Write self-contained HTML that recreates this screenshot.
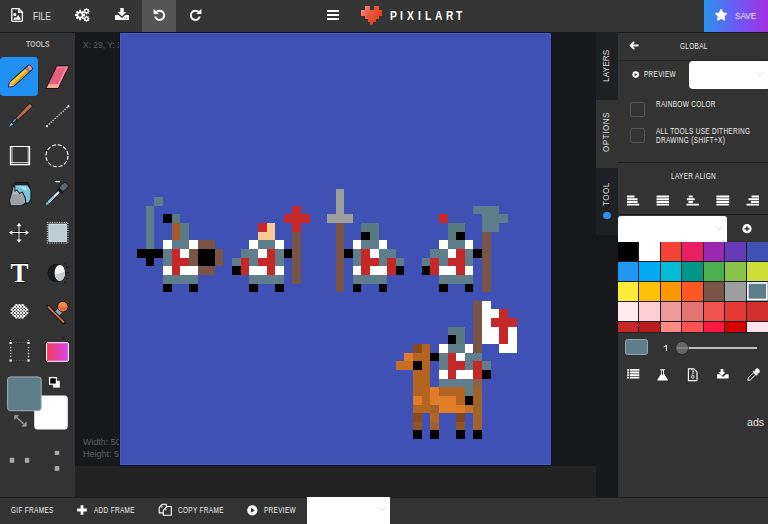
<!DOCTYPE html>
<html><head><meta charset="utf-8">
<style>
*{margin:0;padding:0;box-sizing:border-box}
html,body{width:768px;height:524px;overflow:hidden;background:#17181b;font-family:"Liberation Sans",sans-serif;color:#fff}
.a{position:absolute}
.t{position:absolute;white-space:nowrap;line-height:1}
svg{position:absolute;overflow:visible}
</style></head><body>
<!-- header -->
<div class="a" style="left:0;top:0;width:768px;height:32px;background:#353535"></div>
<div class="a" style="left:142px;top:0;width:34px;height:32px;background:#555"></div>
<!-- file icon -->
<svg style="left:0;top:0" width="30" height="30" viewBox="0 0 30 30">
 <path d="M12.6 8.6H18.8L22.4 12.2V20.5Q22.4 21.3 21.6 21.3H12.6Q11.8 21.3 11.8 20.5V9.4Q11.8 8.6 12.6 8.6z" fill="none" stroke="#fff" stroke-width="1.3"/>
 <path d="M18.6 8.6V12.4H22.4" fill="none" stroke="#fff" stroke-width="1.1"/>
 <path d="M19.4 10.2L20.9 11.7H19.4z" fill="#fff"/>
 <circle cx="14.8" cy="14.5" r="1.5" fill="#fff"/>
 <path d="M13.2 19.8L14.9 16.9L16.1 18.1L18.3 15.1L21 19.8z" fill="#fff"/>
</svg>
<!-- gears -->
<svg style="left:75.2px;top:8.4px" width="15" height="14" viewBox="0 0 15 14">
 <g fill="#fff">
  <circle cx="5" cy="7" r="3.6"/>
  <g stroke="#fff" stroke-width="2"><path d="M5 1.8v10.4M0 7h10M1.4 3.4l7.2 7.2M8.6 3.4l-7.2 7.2"/></g>
  <circle cx="5" cy="7" r="1.8" fill="#353535"/>
  <circle cx="11.5" cy="3.2" r="2.2"/>
  <g stroke="#fff" stroke-width="1.2"><path d="M11.5 0.2v6M8.5 3.2h6M9.4 1.1l4.2 4.2M13.6 1.1l-4.2 4.2"/></g>
  <circle cx="11.5" cy="3.2" r="1.1" fill="#353535"/>
  <circle cx="11.5" cy="10.8" r="2.2"/>
  <g stroke="#fff" stroke-width="1.2"><path d="M11.5 7.8v6M8.5 10.8h6M9.4 8.7l4.2 4.2M13.6 8.7l-4.2 4.2"/></g>
  <circle cx="11.5" cy="10.8" r="1.1" fill="#353535"/>
 </g>
</svg>
<!-- download -->
<svg style="left:115px;top:8px" width="14" height="12" viewBox="0 0 14 12">
 <path d="M5.3 0h3.4v4h2.6L7 8.3 2.7 4h2.6z" fill="#fff"/>
 <path d="M0 7h3.5l3.5 3 3.5-3H14v5H0z" fill="#fff"/>
 <circle cx="9.8" cy="10.1" r="0.6" fill="#353535"/><circle cx="11.8" cy="10.1" r="0.6" fill="#353535"/>
</svg>
<!-- undo -->
<svg style="left:152.6px;top:8.2px" width="13" height="13" viewBox="0 0 13 13">
 <path d="M3.2 4.2A4.6 4.6 0 1 1 2.2 8.6" fill="none" stroke="#fff" stroke-width="1.9"/>
 <path d="M0.6 0.8v5.2h5.2z" fill="#fff"/>
</svg>
<!-- redo -->
<svg style="left:189.2px;top:8.1px" width="13" height="13" viewBox="0 0 13 13">
 <path d="M9.8 4.2A4.6 4.6 0 1 0 10.8 8.6" fill="none" stroke="#fff" stroke-width="1.9"/>
 <path d="M12.4 0.8v5.2H7.2z" fill="#fff"/>
</svg>
<!-- hamburger -->
<svg style="left:327px;top:10px" width="12" height="10" viewBox="0 0 12 10">
 <path d="M0 0h12v2H0zM0 4h12v2H0zM0 8h12v2H0z" fill="#fff"/>
</svg>
<!-- heart -->
<svg style="left:361px;top:6px" width="21" height="19" viewBox="0 0 21 19">
 <defs><linearGradient id="hg" x1="0" y1="0" x2="1" y2="0.6"><stop offset="0" stop-color="#f59a88"/><stop offset="0.45" stop-color="#ee5a45"/><stop offset="1" stop-color="#e23a16"/></linearGradient></defs>
 <path d="M4 0h5v4h4V0h5v4h3v6h-3v3h-3v3h-3v2.5h-3V16H7v-3H4v-3H0V4h4z" fill="url(#hg)"/>
</svg>
<!-- save -->
<div class="a" style="left:704px;top:0;width:64px;height:32px;background:linear-gradient(90deg,#2a94ee,#6b5cf3 50%,#a22fe2)"></div>
<svg style="left:0;top:0" width="768" height="32" viewBox="0 0 768 32"><path d="M721.10 9.15 L722.89 12.88 L727.00 13.43 L724.00 16.29 L724.74 20.37 L721.10 18.40 L717.46 20.37 L718.20 16.29 L715.20 13.43 L719.31 12.88z" fill="#fff" stroke="#fff" stroke-width="0.9" stroke-linejoin="round"/></svg>

<!-- left toolbar -->
<div class="a" style="left:0;top:33px;width:75px;height:464px;background:#333"></div>
<div class="a" style="left:0;top:57px;width:38px;height:39px;background:#2090f2;border-radius:4px"></div>
<svg style="left:0;top:0" width="75" height="497" viewBox="0 0 75 497">
 <!-- pencil -->
 <g transform="translate(19.8 76.8) rotate(-42)">
  <rect x="-12" y="-3.4" width="27.8" height="6.8" rx="2.5" fill="#1b2440"/>
  <path d="M-16 0L-11.5 -3.4V3.4z" fill="#1b2440"/>
  <rect x="-11" y="-2.4" width="20.5" height="4.8" fill="#f5c93a"/>
  <rect x="-11" y="0.6" width="20.5" height="1.8" fill="#d99b1f"/>
  <path d="M-14.6 0L-11 -2.4V2.4z" fill="#f3d2a6"/>
  <rect x="9.5" y="-2.4" width="2.2" height="4.8" fill="#8e8e96"/>
  <rect x="11.7" y="-2.6" width="3.4" height="5.2" rx="1.8" fill="#e99a92"/>
 </g>
 <!-- eraser -->
 <path d="M56.4 65.3H69.8L58.6 89H45.4z" fill="#1e1216"/>
 <path d="M57 66.4H68.2L57.8 87.9H46.6z" fill="#e5607f"/>
 <path d="M66 66.4H68.2L57.8 87.9H55.8L65.8 67z" fill="#f08aa2"/>
 <path d="M48.6 84.2H59.6L57.8 87.9H46.8z" fill="#f4ae92"/>
 <path d="M57 66.4H68.2L67.4 68.2H56.2z" fill="#ec7a92"/>
 <!-- brush -->
 <g transform="translate(19.7 116.2) rotate(-45)">
  <path d="M-5 -1.9L16 -2.7Q17.6 0 16 2.7L-5 1.9z" fill="#1e1e24"/>
  <path d="M-4 -1.0L15.6 -1.8Q16.6 0 15.6 1.8L-4 1.0z" fill="#b86c4c"/>
  <rect x="-9.5" y="-2.3" width="5.5" height="4.6" fill="#1e2a40"/>
  <rect x="-8.5" y="-1.3" width="3.5" height="1.2" fill="#8894a8"/>
  <path d="M-16 0L-9.5 -2.3V2.3z" fill="#1e2a40"/>
  <path d="M-15 0L-10.5 -1.4V1.4z" fill="#7ec6cc"/>
 </g>
 <!-- line -->
 <g fill="#fff">
  <circle cx="46.8" cy="126.2" r="1.1"/><circle cx="68.4" cy="106.2" r="1.1"/>
 </g>
 <path d="M46.8 126.2L68.4 106.2" stroke="#fff" stroke-width="1.2" stroke-dasharray="1.2 1.5" fill="none"/>
 <!-- rectangle -->
 <path d="M10.4 146.5H29.6V164.6H10.4z" stroke="#fff" stroke-width="1.1" fill="none"/>
 <path d="M12 147V164M28.2 147V164M11 162.6H29" stroke="#fff" stroke-width="0.8" fill="none"/>
 <!-- ellipse -->
 <circle cx="57" cy="155.8" r="11" stroke="#fff" stroke-width="1.1" fill="none" stroke-dasharray="4 1.8"/>
 <!-- bucket -->
 <path d="M12.6 185.6L15.4 182.8H27.4L30.6 187.6" fill="none" stroke="#15171a" stroke-width="1.4"/>
 <path d="M12.8 186.2H26.2V203.4L21.4 206.2H10.2L8.9 200.6z" fill="#15171a"/>
 <path d="M13.6 187.2H25.2V202.8L21 205.2H10.9L9.9 200.6z" fill="#9aa2a8"/>
 <path d="M13.6 187.2H25.2V193L13 194.5z" fill="#b4bcc0"/>
 <path d="M14.2 184.2H27.8L31.4 189.6V199.4L29 203.4H25.4L24.6 197.4L22.2 192.6L19.4 194L16.8 190.6L14.6 192.2z" fill="#15171a"/>
 <path d="M15.2 185.2H27.3L30.4 189.9V199L28.5 202.4H26.3L25.6 197.2L22.6 191.4L19.6 192.8L17 189.4L15.4 190.6z" fill="#76c6da"/>
 <path d="M17 186.2H25L27.6 189.6L24.6 190.4L21.6 188.4z" fill="#a6e0ee"/>
 <!-- eyedropper -->
 <path d="M54.8 181.6H60" stroke="#fff" stroke-width="1.2"/>
 <g transform="translate(57.6 193.2) rotate(-45)">
  <rect x="-13.6" y="-2" width="16" height="4" fill="#15171a"/>
  <rect x="-13" y="-1.1" width="15" height="2.2" fill="#dfe8ea"/>
  <rect x="-13" y="-1.1" width="8" height="2.2" fill="#7ccad8"/>
  <rect x="2" y="-3.2" width="2.6" height="6.4" fill="#15171a"/>
  <rect x="4" y="-3.6" width="10" height="7.2" rx="3.6" fill="#15171a"/>
  <rect x="4.8" y="-2.8" width="8.4" height="5.6" rx="2.8" fill="#5c636c"/>
  <path d="M-16.6 0L-13.6 -1.8V1.8z" fill="#7ccad8"/>
 </g>
 <!-- move -->
 <g stroke="#111" stroke-width="2.6" fill="#111">
  <path d="M10 232.6H28M19 223.8V242"/>
 </g>
 <g fill="#fff">
  <path d="M10.5 232.1H27.5V233.1H10.5zM18.5 224.3H19.5V241.5H18.5z"/>
  <path d="M9 232.6L12.4 230.2V235z M29 232.6L25.6 230.2V235z M19 222.8L16.6 226.2H21.4z M19 242.8L16.6 239.4H21.4z"/>
 </g>
 <!-- selection fill -->
 <rect x="47.3" y="222.4" width="20.6" height="20.6" fill="#1c1e20" stroke="#fff" stroke-width="1" stroke-dasharray="1 1.35"/>
 <rect x="48.8" y="224" width="17.6" height="17.4" fill="#bccdd4" stroke="#e6eef0" stroke-width="0.8"/>
 <!-- text T -->
 <text x="19.5" y="282.4" text-anchor="middle" font-family="Liberation Serif" font-weight="bold" font-size="27" fill="#fff" stroke="#000" stroke-width="0.8" paint-order="stroke">T</text>
 <!-- moon -->
 <g stroke="#111" stroke-width="1">
  <path d="M64 264.5l2.2-2.2M65.6 268l2.8-1M66 272.8h3M65.6 277.6l2.8 1M64 281.2l2.2 2.2"/>
 </g>
 <circle cx="56.6" cy="272.9" r="9.2" fill="#141516"/>
 <circle cx="56.6" cy="272.9" r="8.2" fill="#1a1b1c"/>
 <ellipse cx="59.8" cy="272.9" rx="5.2" ry="8" fill="#f4f4f4"/>
 <path d="M55 275L64.8 271.5A5.2 8 0 0 1 59.8 280.9A5.2 8 0 0 1 55 275z" fill="#c8cacc"/>
 <!-- dither -->
 <g id="dith" fill="#fff"><rect x="15.37" y="304.08" width="2.05" height="2.05" fill="#fff"/><rect x="18.48" y="304.08" width="2.05" height="2.05" fill="#fff"/><rect x="21.58" y="304.08" width="2.05" height="2.05" fill="#fff"/><rect x="13.82" y="305.63" width="2.05" height="2.05" fill="#fff"/><rect x="16.93" y="305.63" width="2.05" height="2.05" fill="#fff"/><rect x="20.03" y="305.63" width="2.05" height="2.05" fill="#fff"/><rect x="23.12" y="305.63" width="2.05" height="2.05" fill="#fff"/><rect x="12.28" y="307.18" width="2.05" height="2.05" fill="#fff"/><rect x="15.37" y="307.18" width="2.05" height="2.05" fill="#fff"/><rect x="18.48" y="307.18" width="2.05" height="2.05" fill="#fff"/><rect x="21.58" y="307.18" width="2.05" height="2.05" fill="#fff"/><rect x="24.68" y="307.18" width="2.05" height="2.05" fill="#fff"/><rect x="10.72" y="308.73" width="2.05" height="2.05" fill="#fff"/><rect x="13.82" y="308.73" width="2.05" height="2.05" fill="#fff"/><rect x="16.93" y="308.73" width="2.05" height="2.05" fill="#fff"/><rect x="20.03" y="308.73" width="2.05" height="2.05" fill="#fff"/><rect x="23.12" y="308.73" width="2.05" height="2.05" fill="#fff"/><rect x="26.23" y="308.73" width="2.05" height="2.05" fill="#fff"/><rect x="12.28" y="310.28" width="2.05" height="2.05" fill="#fff"/><rect x="15.37" y="310.28" width="2.05" height="2.05" fill="#fff"/><rect x="18.48" y="310.28" width="2.05" height="2.05" fill="#fff"/><rect x="21.58" y="310.28" width="2.05" height="2.05" fill="#fff"/><rect x="24.68" y="310.28" width="2.05" height="2.05" fill="#fff"/><rect x="10.72" y="311.83" width="2.05" height="2.05" fill="#fff"/><rect x="13.82" y="311.83" width="2.05" height="2.05" fill="#fff"/><rect x="16.93" y="311.83" width="2.05" height="2.05" fill="#fff"/><rect x="20.03" y="311.83" width="2.05" height="2.05" fill="#fff"/><rect x="23.12" y="311.83" width="2.05" height="2.05" fill="#fff"/><rect x="26.23" y="311.83" width="2.05" height="2.05" fill="#fff"/><rect x="12.28" y="313.38" width="2.05" height="2.05" fill="#fff"/><rect x="15.37" y="313.38" width="2.05" height="2.05" fill="#fff"/><rect x="18.48" y="313.38" width="2.05" height="2.05" fill="#fff"/><rect x="21.58" y="313.38" width="2.05" height="2.05" fill="#fff"/><rect x="24.68" y="313.38" width="2.05" height="2.05" fill="#fff"/><rect x="13.82" y="314.93" width="2.05" height="2.05" fill="#fff"/><rect x="16.93" y="314.93" width="2.05" height="2.05" fill="#fff"/><rect x="20.03" y="314.93" width="2.05" height="2.05" fill="#fff"/><rect x="23.12" y="314.93" width="2.05" height="2.05" fill="#fff"/><rect x="15.37" y="316.48" width="2.05" height="2.05" fill="#fff"/><rect x="18.48" y="316.48" width="2.05" height="2.05" fill="#fff"/><rect x="21.58" y="316.48" width="2.05" height="2.05" fill="#fff"/><circle cx="16.40" cy="306.65" r="0.55" fill="#000"/><circle cx="19.50" cy="306.65" r="0.55" fill="#000"/><circle cx="22.60" cy="306.65" r="0.55" fill="#000"/><circle cx="14.85" cy="308.20" r="0.55" fill="#000"/><circle cx="17.95" cy="308.20" r="0.55" fill="#000"/><circle cx="21.05" cy="308.20" r="0.55" fill="#000"/><circle cx="24.15" cy="308.20" r="0.55" fill="#000"/><circle cx="13.30" cy="309.75" r="0.55" fill="#000"/><circle cx="16.40" cy="309.75" r="0.55" fill="#000"/><circle cx="19.50" cy="309.75" r="0.55" fill="#000"/><circle cx="22.60" cy="309.75" r="0.55" fill="#000"/><circle cx="25.70" cy="309.75" r="0.55" fill="#000"/><circle cx="11.75" cy="311.30" r="0.55" fill="#000"/><circle cx="14.85" cy="311.30" r="0.55" fill="#000"/><circle cx="17.95" cy="311.30" r="0.55" fill="#000"/><circle cx="21.05" cy="311.30" r="0.55" fill="#000"/><circle cx="24.15" cy="311.30" r="0.55" fill="#000"/><circle cx="27.25" cy="311.30" r="0.55" fill="#000"/><circle cx="13.30" cy="312.85" r="0.55" fill="#000"/><circle cx="16.40" cy="312.85" r="0.55" fill="#000"/><circle cx="19.50" cy="312.85" r="0.55" fill="#000"/><circle cx="22.60" cy="312.85" r="0.55" fill="#000"/><circle cx="25.70" cy="312.85" r="0.55" fill="#000"/><circle cx="14.85" cy="314.40" r="0.55" fill="#000"/><circle cx="17.95" cy="314.40" r="0.55" fill="#000"/><circle cx="21.05" cy="314.40" r="0.55" fill="#000"/><circle cx="24.15" cy="314.40" r="0.55" fill="#000"/><circle cx="16.40" cy="315.95" r="0.55" fill="#000"/><circle cx="19.50" cy="315.95" r="0.55" fill="#000"/><circle cx="22.60" cy="315.95" r="0.55" fill="#000"/></g>
 <!-- stamp -->
 <path d="M48 306.6L64 322.4" stroke="#1a1210" stroke-width="3.8" stroke-linecap="round"/>
 <path d="M48.4 307L63.6 322" stroke="#c27048" stroke-width="1.9" stroke-linecap="round"/>
 <path d="M54.5 311.4L58.6 306.8L63.6 312.2L59.4 316.2z" fill="#1b1c22"/>
 <path d="M55.4 311.5L58.6 307.8L62.6 312.2L59.4 315.2z" fill="#8ca2bc"/>
 <circle cx="62.8" cy="306.6" r="5.6" fill="#1a1010"/>
 <circle cx="62.8" cy="306.6" r="4.8" fill="#f08a4a"/>
 <path d="M62.8 306.6m-4.8 0a4.8 4.8 0 0 0 9.6 0" fill="#e86a3a"/>
 <!-- dotted selection -->
 <g fill="#fff"><circle cx="10.6" cy="340.4" r="0.75"/><rect x="9.5" y="342" width="2.2" height="2" /><circle cx="10.6" cy="347.4" r="0.75"/><circle cx="10.6" cy="350.4" r="0.75"/><circle cx="10.6" cy="353.4" r="0.75"/><circle cx="10.6" cy="356.4" r="0.75"/><rect x="9.5" y="359.4" width="2.2" height="2.2"/><circle cx="28.5" cy="340.4" r="0.75"/><rect x="27.4" y="342" width="2.2" height="2" /><circle cx="28.5" cy="347.4" r="0.75"/><circle cx="28.5" cy="350.4" r="0.75"/><circle cx="28.5" cy="353.4" r="0.75"/><circle cx="28.5" cy="356.4" r="0.75"/><rect x="27.4" y="359.4" width="2.2" height="2.2"/><circle cx="13.8" cy="342.6" r="0.5" fill="#777"/><circle cx="13.8" cy="360.6" r="0.5" fill="#777"/><circle cx="16.8" cy="342.6" r="0.5" fill="#777"/><circle cx="16.8" cy="360.6" r="0.5" fill="#777"/><circle cx="19.8" cy="342.6" r="0.5" fill="#777"/><circle cx="19.8" cy="360.6" r="0.5" fill="#777"/><circle cx="22.8" cy="342.6" r="0.5" fill="#777"/><circle cx="22.8" cy="360.6" r="0.5" fill="#777"/><circle cx="25.8" cy="342.6" r="0.5" fill="#777"/><circle cx="25.8" cy="360.6" r="0.5" fill="#777"/></g>
 <!-- gradient -->
 <defs><linearGradient id="gr" x1="0" x2="1"><stop offset="0" stop-color="#f43c58"/><stop offset="1" stop-color="#d846f2"/></linearGradient></defs>
 <rect x="46.6" y="342.7" width="21.8" height="18.6" rx="1" fill="url(#gr)" stroke="#fff" stroke-width="1"/>
 <path d="M61.6 336.8l1.6 1.6 1.6-1.6" stroke="#111" stroke-width="0.9" fill="none"/>
 <!-- colors -->
 <rect x="34.2" y="395.4" width="33.6" height="34" rx="3.5" fill="#fff"/>
 <rect x="7.6" y="376.9" width="33.6" height="33.8" rx="3" fill="#607d8b" stroke="#9eb0b8" stroke-width="1"/>
 <rect x="53" y="380.8" width="6.8" height="6.8" fill="#fff"/>
 <rect x="49.6" y="377.6" width="6.8" height="6.6" fill="#000" stroke="#fff" stroke-width="1.3"/>
 <g stroke="#9a9a9a" stroke-width="1.4" fill="#9a9a9a">
  <path d="M15.6 416.4L25.2 425.2"/>
  <path d="M14.5 415.3h4.2l-4.2 4.2z M26.3 426.3h-4.2l4.2-4.2z" stroke-width="0.6"/>
 </g>
 <!-- dots -->
 <g fill="#aaa">
  <rect x="9.8" y="457.8" width="4.4" height="5"/>
  <rect x="24.9" y="457.8" width="4.3" height="5"/>
  <rect x="54.8" y="450.9" width="4.4" height="4"/>
  <rect x="54.8" y="466" width="4.4" height="4.8"/>
 </g>
</svg>


<!-- canvas area -->
<div class="t" style="left:82.70px;top:40.00px;font-size:9.4px;font-weight:normal;letter-spacing:0px;color:#5d6065;transform-origin:0 0;transform:scaleX(0.9);">X: 29, Y: 3</div>
<div class="t" style="left:82.90px;top:437.00px;font-size:9.4px;font-weight:normal;letter-spacing:0px;color:#5d6065;transform-origin:0 0;transform:scaleX(0.95);">Width: 50</div>
<div class="t" style="left:82.90px;top:449.00px;font-size:9.4px;font-weight:normal;letter-spacing:0px;color:#5d6065;transform-origin:0 0;transform:scaleX(0.957);">Height: 50</div>
<div class="a" style="left:120px;top:33px;width:431px;height:432px;background:#3f51b5;box-shadow:0 0 0 1px #0c1030,inset 0 0 0 1px #4a5bbd"></div>
<svg style="left:120px;top:33px" width="431" height="432" viewBox="0 0 50 50" preserveAspectRatio="none" shape-rendering="crispEdges">
<rect x="25" y="18" width="1" height="1" fill="#9e9e9e"/>
<rect x="4" y="19" width="1" height="1" fill="#607d8b"/>
<rect x="25" y="19" width="1" height="1" fill="#9e9e9e"/>
<rect x="3" y="20" width="1" height="1" fill="#607d8b"/>
<rect x="20" y="20" width="1" height="1" fill="#c62828"/>
<rect x="25" y="20" width="1" height="1" fill="#9e9e9e"/>
<rect x="41" y="20" width="3" height="1" fill="#607d8b"/>
<rect x="3" y="21" width="1" height="1" fill="#607d8b"/>
<rect x="5" y="21" width="1" height="1" fill="#000000"/>
<rect x="6" y="21" width="1" height="1" fill="#587a80"/>
<rect x="19" y="21" width="3" height="1" fill="#c62828"/>
<rect x="24" y="21" width="3" height="1" fill="#9e9e9e"/>
<rect x="37" y="21" width="1" height="1" fill="#c62828"/>
<rect x="42" y="21" width="3" height="1" fill="#607d8b"/>
<rect x="3" y="22" width="1" height="1" fill="#607d8b"/>
<rect x="6" y="22" width="1" height="1" fill="#a05a2c"/>
<rect x="7" y="22" width="1" height="1" fill="#587a80"/>
<rect x="16" y="22" width="1" height="1" fill="#c62828"/>
<rect x="17" y="22" width="1" height="1" fill="#fccb92"/>
<rect x="20" y="22" width="1" height="1" fill="#c62828"/>
<rect x="25" y="22" width="1" height="1" fill="#795548"/>
<rect x="28" y="22" width="2" height="1" fill="#587a80"/>
<rect x="38" y="22" width="2" height="1" fill="#587a80"/>
<rect x="42" y="22" width="2" height="1" fill="#607d8b"/>
<rect x="3" y="23" width="1" height="1" fill="#607d8b"/>
<rect x="6" y="23" width="1" height="1" fill="#a05a2c"/>
<rect x="7" y="23" width="1" height="1" fill="#587a80"/>
<rect x="16" y="23" width="2" height="1" fill="#fccb92"/>
<rect x="20" y="23" width="1" height="1" fill="#795548"/>
<rect x="25" y="23" width="1" height="1" fill="#795548"/>
<rect x="28" y="23" width="1" height="1" fill="#000000"/>
<rect x="29" y="23" width="1" height="1" fill="#587a80"/>
<rect x="38" y="23" width="1" height="1" fill="#587a80"/>
<rect x="39" y="23" width="1" height="1" fill="#000000"/>
<rect x="42" y="23" width="1" height="1" fill="#795548"/>
<rect x="3" y="24" width="1" height="1" fill="#607d8b"/>
<rect x="5" y="24" width="1" height="1" fill="#ffffff"/>
<rect x="6" y="24" width="2" height="1" fill="#607d8b"/>
<rect x="8" y="24" width="1" height="1" fill="#ffffff"/>
<rect x="9" y="24" width="2" height="1" fill="#795548"/>
<rect x="15" y="24" width="1" height="1" fill="#ffffff"/>
<rect x="16" y="24" width="2" height="1" fill="#607d8b"/>
<rect x="18" y="24" width="1" height="1" fill="#ffffff"/>
<rect x="20" y="24" width="1" height="1" fill="#795548"/>
<rect x="25" y="24" width="1" height="1" fill="#795548"/>
<rect x="27" y="24" width="1" height="1" fill="#ffffff"/>
<rect x="28" y="24" width="2" height="1" fill="#607d8b"/>
<rect x="30" y="24" width="1" height="1" fill="#ffffff"/>
<rect x="37" y="24" width="1" height="1" fill="#ffffff"/>
<rect x="38" y="24" width="2" height="1" fill="#607d8b"/>
<rect x="40" y="24" width="1" height="1" fill="#ffffff"/>
<rect x="42" y="24" width="1" height="1" fill="#795548"/>
<rect x="2" y="25" width="3" height="1" fill="#000000"/>
<rect x="5" y="25" width="1" height="1" fill="#607d8b"/>
<rect x="6" y="25" width="1" height="1" fill="#c62828"/>
<rect x="7" y="25" width="1" height="1" fill="#ffffff"/>
<rect x="8" y="25" width="1" height="1" fill="#795548"/>
<rect x="9" y="25" width="2" height="1" fill="#000000"/>
<rect x="11" y="25" width="1" height="1" fill="#795548"/>
<rect x="14" y="25" width="2" height="1" fill="#607d8b"/>
<rect x="16" y="25" width="1" height="1" fill="#ffffff"/>
<rect x="17" y="25" width="1" height="1" fill="#c62828"/>
<rect x="18" y="25" width="1" height="1" fill="#607d8b"/>
<rect x="19" y="25" width="1" height="1" fill="#000000"/>
<rect x="20" y="25" width="1" height="1" fill="#795548"/>
<rect x="25" y="25" width="1" height="1" fill="#795548"/>
<rect x="26" y="25" width="1" height="1" fill="#000000"/>
<rect x="27" y="25" width="1" height="1" fill="#607d8b"/>
<rect x="28" y="25" width="1" height="1" fill="#c62828"/>
<rect x="29" y="25" width="1" height="1" fill="#ffffff"/>
<rect x="30" y="25" width="2" height="1" fill="#607d8b"/>
<rect x="36" y="25" width="2" height="1" fill="#607d8b"/>
<rect x="38" y="25" width="1" height="1" fill="#ffffff"/>
<rect x="39" y="25" width="1" height="1" fill="#c62828"/>
<rect x="40" y="25" width="1" height="1" fill="#607d8b"/>
<rect x="41" y="25" width="1" height="1" fill="#000000"/>
<rect x="42" y="25" width="1" height="1" fill="#795548"/>
<rect x="3" y="26" width="1" height="1" fill="#000000"/>
<rect x="5" y="26" width="1" height="1" fill="#607d8b"/>
<rect x="6" y="26" width="2" height="1" fill="#c62828"/>
<rect x="8" y="26" width="1" height="1" fill="#795548"/>
<rect x="9" y="26" width="2" height="1" fill="#000000"/>
<rect x="11" y="26" width="1" height="1" fill="#795548"/>
<rect x="13" y="26" width="1" height="1" fill="#607d8b"/>
<rect x="14" y="26" width="1" height="1" fill="#c62828"/>
<rect x="15" y="26" width="1" height="1" fill="#607d8b"/>
<rect x="16" y="26" width="2" height="1" fill="#c62828"/>
<rect x="18" y="26" width="1" height="1" fill="#607d8b"/>
<rect x="20" y="26" width="1" height="1" fill="#795548"/>
<rect x="25" y="26" width="1" height="1" fill="#795548"/>
<rect x="27" y="26" width="1" height="1" fill="#607d8b"/>
<rect x="28" y="26" width="2" height="1" fill="#c62828"/>
<rect x="30" y="26" width="1" height="1" fill="#607d8b"/>
<rect x="31" y="26" width="1" height="1" fill="#c62828"/>
<rect x="32" y="26" width="1" height="1" fill="#607d8b"/>
<rect x="35" y="26" width="1" height="1" fill="#607d8b"/>
<rect x="36" y="26" width="1" height="1" fill="#c62828"/>
<rect x="37" y="26" width="1" height="1" fill="#607d8b"/>
<rect x="38" y="26" width="2" height="1" fill="#c62828"/>
<rect x="40" y="26" width="1" height="1" fill="#607d8b"/>
<rect x="42" y="26" width="1" height="1" fill="#795548"/>
<rect x="5" y="27" width="1" height="1" fill="#ffffff"/>
<rect x="6" y="27" width="1" height="1" fill="#c62828"/>
<rect x="7" y="27" width="2" height="1" fill="#ffffff"/>
<rect x="9" y="27" width="2" height="1" fill="#795548"/>
<rect x="13" y="27" width="1" height="1" fill="#000000"/>
<rect x="14" y="27" width="1" height="1" fill="#c62828"/>
<rect x="15" y="27" width="2" height="1" fill="#ffffff"/>
<rect x="17" y="27" width="1" height="1" fill="#c62828"/>
<rect x="18" y="27" width="1" height="1" fill="#ffffff"/>
<rect x="20" y="27" width="1" height="1" fill="#795548"/>
<rect x="25" y="27" width="1" height="1" fill="#795548"/>
<rect x="27" y="27" width="1" height="1" fill="#ffffff"/>
<rect x="28" y="27" width="1" height="1" fill="#c62828"/>
<rect x="29" y="27" width="2" height="1" fill="#ffffff"/>
<rect x="31" y="27" width="1" height="1" fill="#c62828"/>
<rect x="32" y="27" width="1" height="1" fill="#000000"/>
<rect x="35" y="27" width="1" height="1" fill="#000000"/>
<rect x="36" y="27" width="1" height="1" fill="#c62828"/>
<rect x="37" y="27" width="2" height="1" fill="#ffffff"/>
<rect x="39" y="27" width="1" height="1" fill="#c62828"/>
<rect x="40" y="27" width="1" height="1" fill="#ffffff"/>
<rect x="42" y="27" width="1" height="1" fill="#795548"/>
<rect x="5" y="28" width="4" height="1" fill="#607d8b"/>
<rect x="15" y="28" width="4" height="1" fill="#607d8b"/>
<rect x="20" y="28" width="1" height="1" fill="#795548"/>
<rect x="25" y="28" width="1" height="1" fill="#795548"/>
<rect x="27" y="28" width="4" height="1" fill="#607d8b"/>
<rect x="37" y="28" width="4" height="1" fill="#607d8b"/>
<rect x="42" y="28" width="1" height="1" fill="#795548"/>
<rect x="5" y="29" width="1" height="1" fill="#000000"/>
<rect x="8" y="29" width="1" height="1" fill="#000000"/>
<rect x="15" y="29" width="1" height="1" fill="#000000"/>
<rect x="18" y="29" width="1" height="1" fill="#000000"/>
<rect x="25" y="29" width="1" height="1" fill="#795548"/>
<rect x="27" y="29" width="1" height="1" fill="#000000"/>
<rect x="30" y="29" width="1" height="1" fill="#000000"/>
<rect x="37" y="29" width="1" height="1" fill="#000000"/>
<rect x="40" y="29" width="1" height="1" fill="#000000"/>
<rect x="42" y="29" width="1" height="1" fill="#795548"/>
<rect x="41" y="31" width="1" height="1" fill="#795548"/>
<rect x="42" y="31" width="1" height="1" fill="#ffffff"/>
<rect x="41" y="32" width="1" height="1" fill="#795548"/>
<rect x="42" y="32" width="2" height="1" fill="#ffffff"/>
<rect x="44" y="32" width="1" height="1" fill="#c62828"/>
<rect x="41" y="33" width="1" height="1" fill="#795548"/>
<rect x="42" y="33" width="1" height="1" fill="#ffffff"/>
<rect x="43" y="33" width="3" height="1" fill="#c62828"/>
<rect x="38" y="34" width="2" height="1" fill="#587a80"/>
<rect x="41" y="34" width="1" height="1" fill="#795548"/>
<rect x="42" y="34" width="2" height="1" fill="#ffffff"/>
<rect x="44" y="34" width="1" height="1" fill="#c62828"/>
<rect x="45" y="34" width="1" height="1" fill="#ffffff"/>
<rect x="38" y="35" width="1" height="1" fill="#000000"/>
<rect x="39" y="35" width="1" height="1" fill="#587a80"/>
<rect x="41" y="35" width="1" height="1" fill="#795548"/>
<rect x="42" y="35" width="2" height="1" fill="#ffffff"/>
<rect x="44" y="35" width="1" height="1" fill="#c62828"/>
<rect x="45" y="35" width="1" height="1" fill="#ffffff"/>
<rect x="34" y="36" width="1" height="1" fill="#8a4a1a"/>
<rect x="35" y="36" width="1" height="1" fill="#b4641e"/>
<rect x="37" y="36" width="1" height="1" fill="#ffffff"/>
<rect x="38" y="36" width="2" height="1" fill="#607d8b"/>
<rect x="40" y="36" width="1" height="1" fill="#ffffff"/>
<rect x="41" y="36" width="1" height="1" fill="#795548"/>
<rect x="44" y="36" width="2" height="1" fill="#ffffff"/>
<rect x="33" y="37" width="1" height="1" fill="#e07d2a"/>
<rect x="34" y="37" width="2" height="1" fill="#b4641e"/>
<rect x="36" y="37" width="1" height="1" fill="#000000"/>
<rect x="37" y="37" width="1" height="1" fill="#607d8b"/>
<rect x="38" y="37" width="1" height="1" fill="#c62828"/>
<rect x="39" y="37" width="1" height="1" fill="#ffffff"/>
<rect x="40" y="37" width="2" height="1" fill="#607d8b"/>
<rect x="32" y="38" width="2" height="1" fill="#c86e22"/>
<rect x="34" y="38" width="1" height="1" fill="#000000"/>
<rect x="35" y="38" width="1" height="1" fill="#b4641e"/>
<rect x="37" y="38" width="1" height="1" fill="#607d8b"/>
<rect x="38" y="38" width="2" height="1" fill="#c62828"/>
<rect x="40" y="38" width="1" height="1" fill="#607d8b"/>
<rect x="41" y="38" width="1" height="1" fill="#c62828"/>
<rect x="42" y="38" width="1" height="1" fill="#607d8b"/>
<rect x="34" y="39" width="2" height="1" fill="#b4641e"/>
<rect x="37" y="39" width="1" height="1" fill="#ffffff"/>
<rect x="38" y="39" width="1" height="1" fill="#c62828"/>
<rect x="39" y="39" width="2" height="1" fill="#ffffff"/>
<rect x="41" y="39" width="1" height="1" fill="#c62828"/>
<rect x="42" y="39" width="1" height="1" fill="#000000"/>
<rect x="34" y="40" width="2" height="1" fill="#b4641e"/>
<rect x="37" y="40" width="4" height="1" fill="#607d8b"/>
<rect x="41" y="40" width="1" height="1" fill="#8e6248"/>
<rect x="34" y="41" width="2" height="1" fill="#b4641e"/>
<rect x="36" y="41" width="1" height="1" fill="#e07d2a"/>
<rect x="37" y="41" width="3" height="1" fill="#b4641e"/>
<rect x="40" y="41" width="1" height="1" fill="#607d8b"/>
<rect x="41" y="41" width="1" height="1" fill="#a0622a"/>
<rect x="34" y="42" width="1" height="1" fill="#e07d2a"/>
<rect x="35" y="42" width="1" height="1" fill="#b4641e"/>
<rect x="36" y="42" width="3" height="1" fill="#e07d2a"/>
<rect x="39" y="42" width="1" height="1" fill="#b4641e"/>
<rect x="40" y="42" width="1" height="1" fill="#000000"/>
<rect x="41" y="42" width="1" height="1" fill="#a0622a"/>
<rect x="34" y="43" width="2" height="1" fill="#b4641e"/>
<rect x="36" y="43" width="1" height="1" fill="#a0622a"/>
<rect x="37" y="43" width="3" height="1" fill="#e07d2a"/>
<rect x="40" y="43" width="1" height="1" fill="#c0742a"/>
<rect x="41" y="43" width="1" height="1" fill="#a0622a"/>
<rect x="34" y="44" width="1" height="1" fill="#8a4a1a"/>
<rect x="36" y="44" width="1" height="1" fill="#b4641e"/>
<rect x="39" y="44" width="1" height="1" fill="#7e461e"/>
<rect x="41" y="44" width="1" height="1" fill="#a0622a"/>
<rect x="34" y="45" width="1" height="1" fill="#925424"/>
<rect x="36" y="45" width="1" height="1" fill="#a0622a"/>
<rect x="39" y="45" width="1" height="1" fill="#925424"/>
<rect x="41" y="45" width="1" height="1" fill="#a0622a"/>
<rect x="34" y="46" width="1" height="1" fill="#000000"/>
<rect x="36" y="46" width="1" height="1" fill="#000000"/>
<rect x="39" y="46" width="1" height="1" fill="#000000"/>
<rect x="41" y="46" width="1" height="1" fill="#000000"/>
</svg>
<div class="a" style="left:75px;top:466px;width:521px;height:31px;background:#232323"></div>

<!-- tabs -->
<div class="a" style="left:596px;top:32px;width:22px;height:68px;background:#1f2023"></div>
<div class="a" style="left:596px;top:100px;width:22px;height:68px;background:#333"></div>
<div class="a" style="left:596px;top:168px;width:22px;height:67px;background:#1f2023"></div>
<div class="a" style="left:603.3px;top:212.1px;width:7.4px;height:7.4px;border-radius:50%;background:#2b8cf4"></div>

<!-- right panel -->
<div class="a" style="left:618px;top:33px;width:150px;height:464px;background:#333"></div>
<!-- panel header -->
<svg style="left:629px;top:40.6px" width="10" height="9" viewBox="0 0 10 9">
 <path d="M4.5 0.2L0.4 4.5L4.5 8.8L5.8 7.5L3.8 5.5H9.6V3.5H3.8L5.8 1.5z" fill="#fff"/>
</svg>
<div class="a" style="left:618px;top:59.5px;width:150px;height:1px;background:#262626"></div>
<svg style="left:631.5px;top:70.6px" width="8" height="8" viewBox="0 0 8 8">
 <circle cx="3.7" cy="3.6" r="3.3" fill="#fff"/><path d="M2.7 1.9v3.4l2.6-1.7z" fill="#333"/>
</svg>
<div class="a" style="left:689px;top:61px;width:82px;height:28px;background:#fff;border-radius:4px"></div>
<svg style="left:756px;top:72px" width="8" height="5" viewBox="0 0 8 5"><path d="M0.5 0.5L4 4L7.5 0.5" stroke="#ddd" stroke-width="0.8" fill="none"/></svg>
<!-- checkboxes -->
<div class="a" style="left:629.5px;top:101.5px;width:15px;height:15px;border:1.6px solid #555;border-radius:2px"></div>
<div class="a" style="left:629.5px;top:128.3px;width:15px;height:15px;border:1.6px solid #555;border-radius:2px"></div>
<div class="a" style="left:618px;top:161.5px;width:150px;height:1px;background:#222"></div>
<svg style="left:618px;top:190px" width="150" height="20" viewBox="0 0 150 20">
 <g fill="#fff">
  <path d="M9 5.6h7.5v1.9H9zM9 8.3h10.5v1.9H9zM9 11h10.5v1.9H9zM9 13.7h12.2v1.9H9z"/>
  <path d="M38.6 5.6h12.4v1.9H38.6zM38.6 8.3h12.4v1.9H38.6zM38.6 11h12.4v1.9H38.6zM38.6 13.7h12.4v1.9H38.6z"/>
  <path d="M71.2 5.6h4v1.9h-4zM69.4 8.3h7.8v1.9h-7.8zM71 11h4.4v1.9H71zM69 13.7h12.4v1.9H69z" transform="translate(-0.5 0)"/>
  <path d="M98.4 5.6h12.8v1.9H98.4zM98.4 8.3h12.8v1.9H98.4zM98.4 11h12.8v1.9H98.4zM98.4 13.7h12.8v1.9H98.4z"/>
  <path d="M133.5 5.6h7.5v1.9h-7.5zM130.5 8.3h10.5v1.9h-10.5zM133 11h8v1.9h-8zM128.6 13.7h12.4v1.9h-12.4z"/>
 </g>
</svg>
<div class="a" style="left:618px;top:213.8px;width:150px;height:1.6px;background:#1f1f1f"></div>
<div class="a" style="left:618px;top:215.5px;width:109px;height:28px;background:#fff;border-radius:3px 3px 0 0"></div>
<svg style="left:715px;top:226px" width="8" height="5" viewBox="0 0 8 5"><path d="M0.5 0.5L4 4L7.5 0.5" stroke="#ddd" stroke-width="0.8" fill="none"/></svg>
<svg style="left:742px;top:224px" width="10" height="10" viewBox="0 0 10 10">
 <circle cx="5" cy="4.7" r="4.6" fill="#fff"/><path d="M4.3 2.2h1.4v1.8h1.8v1.4H5.7v1.8H4.3V5.4H2.5V4h1.8z" fill="#333"/>
</svg>
<!-- palette -->
<div class="a" style="left:618px;top:241.5px;width:150px;height:91px;background:#1c1c24"></div>
<svg style="left:618px;top:242px;overflow:hidden" width="150" height="90" viewBox="0 0 150 90" shape-rendering="crispEdges">
<rect x="0.00" y="0.00" width="20.43" height="18.9" fill="#000000"/>
<rect x="21.43" y="0.00" width="20.43" height="18.9" fill="#ffffff"/>
<rect x="42.86" y="0.00" width="20.43" height="18.9" fill="#f44336"/>
<rect x="64.29" y="0.00" width="20.43" height="18.9" fill="#e91e63"/>
<rect x="85.71" y="0.00" width="20.43" height="18.9" fill="#9c27b0"/>
<rect x="107.14" y="0.00" width="20.43" height="18.9" fill="#673ab7"/>
<rect x="128.57" y="0.00" width="21.43" height="18.9" fill="#3f51b5"/>
<rect x="0.00" y="19.90" width="20.43" height="18.9" fill="#2196f3"/>
<rect x="21.43" y="19.90" width="20.43" height="18.9" fill="#03a9f4"/>
<rect x="42.86" y="19.90" width="20.43" height="18.9" fill="#00bcd4"/>
<rect x="64.29" y="19.90" width="20.43" height="18.9" fill="#009688"/>
<rect x="85.71" y="19.90" width="20.43" height="18.9" fill="#4caf50"/>
<rect x="107.14" y="19.90" width="20.43" height="18.9" fill="#8bc34a"/>
<rect x="128.57" y="19.90" width="21.43" height="18.9" fill="#cddc39"/>
<rect x="0.00" y="39.80" width="20.43" height="18.9" fill="#ffeb3b"/>
<rect x="21.43" y="39.80" width="20.43" height="18.9" fill="#ffc107"/>
<rect x="42.86" y="39.80" width="20.43" height="18.9" fill="#ff9800"/>
<rect x="64.29" y="39.80" width="20.43" height="18.9" fill="#ff5722"/>
<rect x="85.71" y="39.80" width="20.43" height="18.9" fill="#795548"/>
<rect x="107.14" y="39.80" width="20.43" height="18.9" fill="#9e9e9e"/>
<rect x="128.57" y="39.80" width="21.43" height="18.9" fill="#607d8b"/>
<rect x="0.00" y="59.70" width="20.43" height="18.9" fill="#ffebee"/>
<rect x="21.43" y="59.70" width="20.43" height="18.9" fill="#ffcdd2"/>
<rect x="42.86" y="59.70" width="20.43" height="18.9" fill="#ef9a9a"/>
<rect x="64.29" y="59.70" width="20.43" height="18.9" fill="#e57373"/>
<rect x="85.71" y="59.70" width="20.43" height="18.9" fill="#ef5350"/>
<rect x="107.14" y="59.70" width="20.43" height="18.9" fill="#e53935"/>
<rect x="128.57" y="59.70" width="21.43" height="18.9" fill="#d32f2f"/>
<rect x="0.00" y="79.60" width="20.43" height="18.9" fill="#c62828"/>
<rect x="21.43" y="79.60" width="20.43" height="18.9" fill="#b71c1c"/>
<rect x="42.86" y="79.60" width="20.43" height="18.9" fill="#ff8a80"/>
<rect x="64.29" y="79.60" width="20.43" height="18.9" fill="#ff5252"/>
<rect x="85.71" y="79.60" width="20.43" height="18.9" fill="#ff1744"/>
<rect x="107.14" y="79.60" width="20.43" height="18.9" fill="#d50000"/>
<rect x="128.57" y="79.60" width="21.43" height="18.9" fill="#fce4ec"/>
<rect x="129.77" y="41.00" width="19.03" height="16.5" fill="none" stroke="#fff" stroke-width="1.6" shape-rendering="auto"/>
</svg>
<div class="a" style="left:618px;top:332px;width:150px;height:1px;background:#222"></div>
<!-- swatch + slider -->
<svg style="left:0;top:0" width="768" height="524" viewBox="0 0 768 524"><path d="M663.6 346.4L666 344.9H667V351.1H665.9V346.5L663.9 347.5z" fill="#d6d6d6"/></svg>
<div class="a" style="left:625.2px;top:338.7px;width:23.2px;height:16px;background:#607d8b;border:1px solid #93a4ac;border-radius:2.5px"></div>
<div class="a" style="left:683px;top:347px;width:74.4px;height:2px;background:#bdbdbd"></div>
<div class="a" style="left:676.4px;top:342.2px;width:11.8px;height:11.8px;border-radius:50%;background:#666;box-shadow:0 0 0 0.8px #2a2a2a"></div>
<div class="a" style="left:676.6px;top:347.2px;width:11.2px;height:1.4px;background:rgba(150,150,150,0.6)"></div>
<!-- tool icons row -->
<svg style="left:618px;top:366px" width="150" height="18" viewBox="0 0 150 18">
 <g fill="#fff">
  <!-- list -->
  <path d="M9.2 3h2v1.8h-2zM12 3h9.3v1.8H12zM9.2 5.6h2v1.8h-2zM12 5.6h9.3v1.8H12zM9.2 8.2h2v1.8h-2zM12 8.2h9.3v1.8H12zM9.2 10.8h2v1.8h-2zM12 10.8h9.3v1.8H12z"/>
  <!-- flask -->
  <path d="M42.2 3.3h4.6v1h-0.8v3.4l3.8 6v0.9H39.4v-0.9l3.8-6V4.3h-1z"/>
  <path d="M43.9 4.6h1.2v3.2l-1.2 2z" fill="#333"/>
  <!-- zip doc -->
  <path d="M70.4 2.9h5.4l3.2 3.2v8.5h-8.6z" fill="none" stroke="#fff" stroke-width="1.1"/>
  <path d="M74.1 3.4h1v1h-1zM75.1 4.4h1v1h-1zM74.1 5.4h1v1h-1zM75.1 6.4h1v1h-1zM74.1 7.4h1v1h-1z"/>
  <ellipse cx="74.8" cy="10.9" rx="1.3" ry="1.5" fill="none" stroke="#fff" stroke-width="0.8"/>
  <!-- download -->
  <path d="M102.6 3h2.8v3.2h2.2l-3.6 3.5-3.6-3.5h2.2z"/>
  <path d="M99 8.3h3l3 2.6 3-2.6h2.6v4.3H99z"/>
  <!-- dropper -->
  <g transform="translate(135.3 9.0) rotate(-45) scale(0.9)">
   <rect x="3.5" y="-2.8" width="5.5" height="5.6" rx="2.6"/>
   <rect x="2.2" y="-3.4" width="1.6" height="6.8"/>
   <path d="M-8.4 0L-6.4 -1.6H2.4V1.6H-6.4z" fill="none" stroke="#fff" stroke-width="1"/>
  </g>
 </g>
</svg>


<!-- bottom bar -->
<div class="a" style="left:0;top:497px;width:768px;height:27px;background:#333"></div>
<div class="a" style="left:0;top:496.5px;width:768px;height:1px;background:#1f1f1f"></div>
<svg style="left:77px;top:504.6px" width="10" height="10" viewBox="0 0 10 10"><path d="M3.6 0.2h2.8v3.4H9.8v2.8H6.4v3.4H3.6V6.4H0.2V3.6h3.4z" fill="#fff"/></svg>
<svg style="left:155px;top:500px" width="20" height="18" viewBox="0 0 20 18">
 <path d="M8.3 10.3L12 6.5H16.3V15.3H8.3Z" fill="none" stroke="#fff" stroke-width="1.1" stroke-linejoin="round"/>
 <path d="M8.3 12.9H4.2V7.5L7.5 4.2H11.3V6.5" fill="none" stroke="#fff" stroke-width="1.1" stroke-linejoin="round"/>
 <path d="M5.6 7.4L7.4 5.6V7.4z M9.6 10.3L11.4 8.5V10.3z" fill="#fff"/>
</svg>
<svg style="left:247px;top:504.8px" width="11" height="11" viewBox="0 0 11 11">
 <circle cx="5.3" cy="5.3" r="5.1" fill="#fff"/><path d="M4 2.8v5l3.8-2.5z" fill="#333"/>
</svg>
<div class="a" style="left:307px;top:497px;width:83px;height:27px;background:#fff"></div>
<svg style="left:378px;top:507px" width="8" height="5" viewBox="0 0 8 5"><path d="M0.5 0.5L4 4L7.5 0.5" stroke="#ddd" stroke-width="0.8" fill="none"/></svg>

<div class="t" style="left:32.60px;top:12.30px;font-size:10px;font-weight:normal;letter-spacing:0px;color:#e0e0e0;transform-origin:0 0;transform:scaleX(0.85);">FILE</div>
<div class="t" style="left:734.60px;top:11.00px;font-size:9.9px;font-weight:normal;letter-spacing:0px;color:#f0e8ff;transform-origin:0 0;transform:scaleX(0.825);">SAVE</div>
<div class="t" style="left:25.50px;top:40.00px;font-size:8.6px;font-weight:bold;letter-spacing:0px;color:#bdbdbd;transform-origin:0 0;transform:scaleX(0.8);">TOOLS</div>
<div class="t" style="left:679.90px;top:42.00px;font-size:8.4px;font-weight:normal;letter-spacing:0.42px;color:#efefef;transform-origin:0 0;transform:scaleX(0.77);">GLOBAL</div>
<div class="t" style="left:644.00px;top:70.00px;font-size:8.4px;font-weight:normal;letter-spacing:0.42px;color:#efefef;transform-origin:0 0;transform:scaleX(0.77);">PREVIEW</div>
<div class="t" style="left:655.60px;top:100.00px;font-size:8.4px;font-weight:normal;letter-spacing:0.42px;color:#efefef;transform-origin:0 0;transform:scaleX(0.77);">RAINBOW COLOR</div>
<div class="t" style="left:655.60px;top:127.00px;font-size:8.4px;font-weight:normal;letter-spacing:0.42px;color:#efefef;transform-origin:0 0;transform:scaleX(0.77);">ALL TOOLS USE DITHERING</div>
<div class="t" style="left:655.60px;top:136.00px;font-size:8.4px;font-weight:normal;letter-spacing:0.42px;color:#efefef;transform-origin:0 0;transform:scaleX(0.77);">DRAWING (SHIFT+X)</div>
<div class="t" style="left:670.80px;top:171.50px;font-size:8.4px;font-weight:normal;letter-spacing:0.42px;color:#efefef;transform-origin:0 0;transform:scaleX(0.77);">LAYER ALIGN</div>
<div class="t" style="left:11.00px;top:506.00px;font-size:8.4px;font-weight:normal;letter-spacing:0.42px;color:#efefef;transform-origin:0 0;transform:scaleX(0.77);">GIF FRAMES</div>
<div class="t" style="left:93.90px;top:506.00px;font-size:8.4px;font-weight:normal;letter-spacing:0.42px;color:#efefef;transform-origin:0 0;transform:scaleX(0.77);">ADD FRAME</div>
<div class="t" style="left:177.90px;top:506.00px;font-size:8.4px;font-weight:normal;letter-spacing:0.42px;color:#efefef;transform-origin:0 0;transform:scaleX(0.77);">COPY FRAME</div>
<div class="t" style="left:264.20px;top:506.00px;font-size:8.4px;font-weight:normal;letter-spacing:0.42px;color:#efefef;transform-origin:0 0;transform:scaleX(0.77);">PREVIEW</div>
<div class="t" style="left:746.60px;top:417.00px;font-size:11px;font-weight:normal;letter-spacing:0px;color:#e0e0e0;transform-origin:0 0;transform:scaleX(0.97);">ads</div>
<div class="t" style="left:601.41px;top:82.00px;font-size:9.4px;letter-spacing:0px;color:#dedede;transform-origin:0 0;transform:rotate(-90deg) scaleX(0.89)">LAYERS</div>
<div class="t" style="left:601.41px;top:152.00px;font-size:9.4px;letter-spacing:0.62px;color:#dedede;transform-origin:0 0;transform:rotate(-90deg) scaleX(0.86)">OPTIONS</div>
<div class="t" style="left:601.31px;top:206.20px;font-size:9.4px;letter-spacing:0.45px;color:#dedede;transform-origin:0 0;transform:rotate(-90deg) scaleX(0.87)">TOOL</div>
<div class="t" style="left:389.78px;top:10.00px;font-size:12.8px;font-weight:bold;letter-spacing:0px;color:#ffffff;transform-origin:0 0;transform:scaleX(0.8);">P</div>
<div class="t" style="left:400.28px;top:10.00px;font-size:12.8px;font-weight:bold;letter-spacing:0px;color:#ffffff;transform-origin:0 0;transform:scaleX(0.8);">I</div>
<div class="t" style="left:407.10px;top:10.00px;font-size:12.8px;font-weight:bold;letter-spacing:0px;color:#ffffff;transform-origin:0 0;transform:scaleX(0.8);">X</div>
<div class="t" style="left:418.08px;top:10.00px;font-size:12.8px;font-weight:bold;letter-spacing:0px;color:#ffffff;transform-origin:0 0;transform:scaleX(0.8);">I</div>
<div class="t" style="left:424.68px;top:10.00px;font-size:12.8px;font-weight:bold;letter-spacing:0px;color:#ffffff;transform-origin:0 0;transform:scaleX(0.8);">L</div>
<div class="t" style="left:434.80px;top:10.00px;font-size:12.8px;font-weight:bold;letter-spacing:0px;color:#ffffff;transform-origin:0 0;transform:scaleX(0.8);">A</div>
<div class="t" style="left:446.28px;top:10.00px;font-size:12.8px;font-weight:bold;letter-spacing:0px;color:#ffffff;transform-origin:0 0;transform:scaleX(0.8);">R</div>
<div class="t" style="left:455.60px;top:10.00px;font-size:12.8px;font-weight:bold;letter-spacing:0px;color:#ffffff;transform-origin:0 0;transform:scaleX(0.8);">T</div>
</body></html>
